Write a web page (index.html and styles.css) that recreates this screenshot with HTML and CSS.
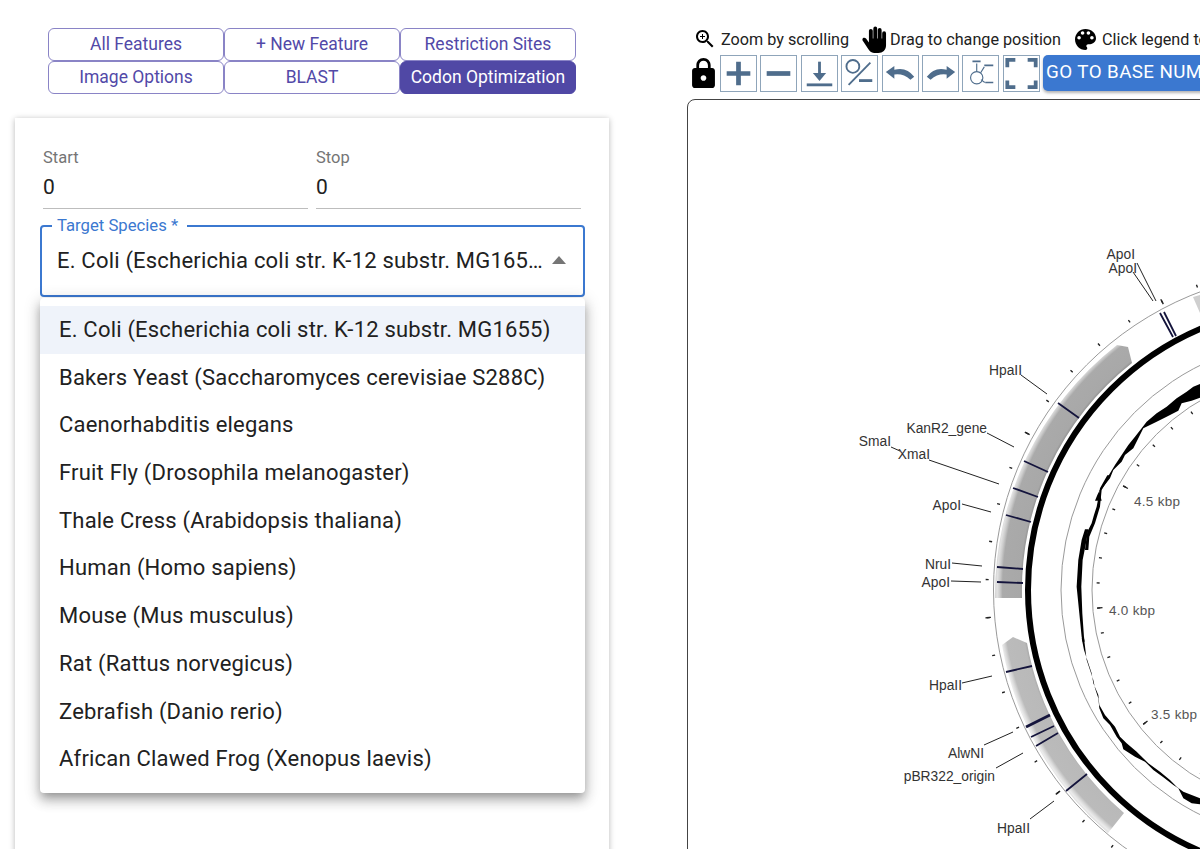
FILE: index.html
```html
<!DOCTYPE html>
<html lang="en">
<head>
    <meta charset="UTF-8">
    <meta name="viewport" content="width=device-width, initial-scale=1.0">
    <title>Plasmid Editor</title>
    <link rel="stylesheet" href="styles.css">
</head>
<body>
    <div class="page">
        <div class="left-column">
            <div class="tabs">
                <button class="tab">All Features</button>
                <button class="tab">+ New Feature</button>
                <button class="tab">Restriction Sites</button>
                <button class="tab">Image Options</button>
                <button class="tab">BLAST</button>
                <button class="tab active">Codon Optimization</button>
            </div>
            <div class="card">
                <div class="range">
                    <div class="field">
                        <label>Start</label>
                        <div class="value">0</div>
                    </div>
                    <div class="field">
                        <label>Stop</label>
                        <div class="value">0</div>
                    </div>
                </div>
                <div class="select-wrap">
                    <fieldset class="select">
                        <legend>Target Species *</legend>
                        <div class="select-row">
                            <span class="select-value">E. Coli (Escherichia coli str. K-12 substr. MG1655)</span>
                            <span class="caret"></span>
                        </div>
                    </fieldset>
                    <ul class="menu">
                        <li class="selected">E. Coli (Escherichia coli str. K-12 substr. MG1655)</li>
                        <li>Bakers Yeast (Saccharomyces cerevisiae S288C)</li>
                        <li>Caenorhabditis elegans</li>
                        <li>Fruit Fly (Drosophila melanogaster)</li>
                        <li>Thale Cress (Arabidopsis thaliana)</li>
                        <li>Human (Homo sapiens)</li>
                        <li>Mouse (Mus musculus)</li>
                        <li>Rat (Rattus norvegicus)</li>
                        <li>Zebrafish (Danio rerio)</li>
                        <li>African Clawed Frog (Xenopus laevis)</li>
                    </ul>
                </div>
            </div>
        </div>
        <div class="right-column">
            <div class="hints">
                <span class="hint hint-zoom">
                    <svg class="hint-icon" viewBox="0 0 24 24"><path d="M15.5 14h-.79l-.28-.27C15.41 12.59 16 11.11 16 9.5 16 5.91 13.09 3 9.5 3S3 5.91 3 9.5 5.91 16 9.5 16c1.61 0 3.09-.59 4.23-1.57l.27.28v.79l5 4.99L20.49 19l-4.99-5zm-6 0C7.01 14 5 11.99 5 9.5S7.01 5 9.5 5 14 7.01 14 9.5 11.99 14 9.5 14z"/><path d="M12 10h-2v2H9v-2H7V9h2V7h1v2h2v1z"/></svg>
                    Zoom by scrolling
                </span>
                <span class="hint hint-drag">
                    <svg class="hand-icon" viewBox="0 0 26 28"><path d="M1 15.500l5.500 8.500c1.500 2.500 3 4 6 4h4.500c4.500 0 8-3 8-8V7.500a2 2 0 0 0-4 0V13h-.6V4a2 2 0 0 0-4 0v9h-.6V2.500a2 2 0 0 0-4 0V13h-.6V5a2 2 0 0 0-4 0v12l-3-4c-1.800-2-5-.5-3.300 2.500z"/></svg>
                    Drag to change position
                </span>
                <span class="hint hint-color">
                    <svg class="hint-icon palette" viewBox="3 3 18 18"><path d="M12 3c-4.970 0-9 4.030-9 9s4.030 9 9 9c.83 0 1.500-.67 1.500-1.500 0-.39-.15-.74-.39-1.010-.23-.26-.38-.61-.38-.99 0-.83.67-1.500 1.500-1.500H16c2.760 0 5-2.240 5-5 0-4.420-4.030-8-9-8zm-5.500 9c-.83 0-1.500-.67-1.500-1.500S5.670 9 6.500 9 8 9.670 8 10.500 7.330 12 6.500 12zm3-4C8.670 8 8 7.330 8 6.500S8.670 5 9.500 5s1.500.67 1.500 1.500S10.330 8 9.500 8zm5 0c-.83 0-1.500-.67-1.500-1.500S13.670 5 14.500 5s1.500.67 1.500 1.500S15.330 8 14.500 8zm3 4c-.83 0-1.500-.67-1.500-1.500S16.670 9 17.500 9s1.500.67 1.500 1.500-.67 1.500-1.500 1.500z"/></svg>
                    Click legend to change color
                </span>
            </div>
            <div class="toolbar">
                <svg class="lock" viewBox="4 1 16 21"><path d="M18 8h-1V6c0-2.760-2.240-5-5-5S7 3.240 7 6v2H6c-1.100 0-2 .9-2 2v10c0 1.100.9 2 2 2h12c1.100 0 2-.9 2-2V10c0-1.100-.9-2-2-2zm-6 9c-1.100 0-2-.9-2-2s.9-2 2-2 2 .9 2 2-.9 2-2 2zm3.100-9H8.900V6c0-1.710 1.390-3.100 3.100-3.100 1.710 0 3.100 1.390 3.100 3.100v2z"/></svg>
                <button class="tool"><svg viewBox="0 0 37 37"><path class="thick" d="M6 18.500h25M18.500 6v25"/></svg></button>
                <button class="tool"><svg viewBox="0 0 37 37"><path class="thick" d="M6 18.500h25"/></svg></button>
                <button class="tool"><svg viewBox="0 0 37 37"><path class="mid" d="M5 30.500h27"/><path class="mid" d="M18.500 6v14"/><path class="solid" d="M11.500 18h14l-7 8.500z"/></svg></button>
                <button class="tool"><svg viewBox="0 0 37 37"><circle class="thin" cx="11.500" cy="11" r="6.800"/><path class="thin" d="M30 7L7 30.500"/><path class="mid" d="M18 26h14"/></svg></button>
                <button class="tool"><svg viewBox="0 0 37 37"><path class="solid" d="M3 17l9-6.500v4Q25 11 33 22l-4 3q-8-7-17-5.500V24z"/></svg></button>
                <button class="tool"><svg viewBox="0 0 37 37"><path class="solid" d="M34 17l-9-6.500v4Q12 11 4 22l4 3q8-7 17-5.500V24z"/></svg></button>
                <button class="tool"><svg viewBox="0 0 37 37"><circle class="fine" cx="14.500" cy="23" r="6.500"/><path class="fine" d="M14.500 8v8.500M22.500 11.500L18.500 18M19 25l4 3"/><path class="dash" d="M10 5.700h8.600M22.500 10H32M23.500 28H32"/></svg></button>
                <button class="tool"><svg viewBox="0 0 37 37"><path class="corner" d="M3.500 12V4H12M25 4h8.500v8M33.500 26v7H25M12 33H3.500v-7"/></svg></button>
                <button class="go-button">GO TO BASE NUMBER</button>
            </div>
            <div class="map-panel">
                <svg class="map" viewBox="688 100 600 800">
                    <defs>
                        <radialGradient id="band-a" gradientUnits="userSpaceOnUse" cx="1312" cy="590" r="318">
                            <stop offset="0.909" stop-color="#8e8e8e"/>
                            <stop offset="0.919" stop-color="#a8a8a8"/>
                            <stop offset="0.973" stop-color="#aaaaaa"/>
                            <stop offset="0.982" stop-color="#cccccc"/>
                            <stop offset="0.99" stop-color="#e2e2e2"/>
                            <stop offset="1" stop-color="#cccccc"/>
                        </radialGradient>
                        <radialGradient id="band-b" gradientUnits="userSpaceOnUse" cx="1312" cy="590" r="318">
                            <stop offset="0.909" stop-color="#a2a2a2"/>
                            <stop offset="0.919" stop-color="#b9b9b9"/>
                            <stop offset="0.973" stop-color="#bbbbbb"/>
                            <stop offset="0.982" stop-color="#d8d8d8"/>
                            <stop offset="0.99" stop-color="#ececec"/>
                            <stop offset="1" stop-color="#d8d8d8"/>
                        </radialGradient>
                    </defs>

                    <!-- features -->
                    <path fill="url(#band-a)" d="M995 598A318 318 0 0 1 1117 345L1128 347L1132 363A290 290 0 0 0 1022 598Z"/>
                    <path fill="url(#band-b)" d="M1002 645L1013 637L1027 643A290 290 0 0 0 1124 813L1108 833A318 318 0 0 1 1002 645Z"/>
                    <path fill="#cfcfcf" d="M1193 297L1210 292V318L1200 313Z"/>

                    <!-- rings -->
                    <circle class="ring" cx="1312" cy="590" r="318.500"/>
                    <circle class="ring-main" cx="1312" cy="590" r="284"/>
                    <circle class="ring" cx="1312" cy="590" r="251"/>
                    <circle class="ring" cx="1312" cy="590" r="220"/>

                    <!-- ticks -->
                    <circle class="tick tick-long" cx="1312" cy="590" r="325" pathLength="360" stroke-dasharray="0.24 6.5" transform="rotate(-0.24 1312 590)"/>
                    <circle class="tick tick-major" cx="1312" cy="590" r="325" pathLength="360" stroke-dasharray="0.24 33.46" transform="rotate(6.5 1312 590)"/>
                    <circle class="tick tick-long" cx="1312" cy="590" r="214" pathLength="360" stroke-dasharray="0.36 6.38" transform="rotate(-0.24 1312 590)"/>
                    <circle class="tick tick-major" cx="1312" cy="590" r="213" pathLength="360" stroke-dasharray="0.36 33.34" transform="rotate(6.5 1312 590)"/>

                    <!-- gc content, traced -->
                    <g transform="translate(1060 370) scale(0.3333)">
                        <polygon class="gc" points="440,34 420,42 400,50 380,65 350,85 320,110 290,130 260,155 245,175 225,200 205,225 185,255 165,285 150,310 135,335 122,355 112,375 105,392 125,392 118,365 130,350 150,325 160,300 185,275 195,255 220,235 235,205 250,175 290,155 320,140 355,122 365,100 395,92 440,76"/>
                    </g>
                    <g transform="translate(850 230) scale(0.3333)">
                        <polygon class="gc" points="772,736 750,775 745,805 740,830 732,855 725,880 712,905 710,920 705,960 715,960 718,920 735,880 750,830 755,780 782,736"/>
                    </g>
                    <g transform="translate(850 530) scale(0.3333)">
                        <polygon class="gc" points="705,-2 695,30 685,90 680,170 688,250 695,320 698,335 704,335 702,320 697,250 694,170 698,90 708,40 715,-2"/>
                    </g>
                    <g transform="translate(1060 640) scale(0.3333)">
                        <polygon class="gc" points="65,-5 72,30 85,70 95,100 100,130 115,165 118,195 135,225 165,260 180,290 200,310 230,335 265,370 300,395 330,420 350,440 370,455 420,475 440,480 440,495 395,490 370,475 355,445 340,435 310,412 280,390 255,365 225,350 190,328 185,310 170,290 150,255 130,235 118,205 115,175 105,145 100,120 90,90 80,60 72,-5"/>
                    </g>

                    <!-- restriction sites -->
                    <path class="site" d="M1160 313L1173 337M1164 312L1176 336M1058 403L1079 418M1024 461L1048 472M1013 488L1038 497M1006 515L1031 522M997 567L1023 569M997 582L1023 583M1006 672L1032 666M1031 737L1054 726M1036 746L1058 733M1066 791L1087 774"/>
                    <path class="site site-thick" d="M1026 727L1050 715"/>

                    <!-- leaders -->
                    <path class="leader" d="M1137 263L1156 301M1133 272L1153 301M1021 375L1047 394M987 433L1014 447M891 447L900 451M929 460L999 484M962 504L991 512M952 563L982 566M951 581L981 582M962 683L992 676M984 745L1013 732M996 768L1023 753M1030 819L1054 801"/>

                    <!-- labels -->
                    <text class="label" x="1135" y="259">ApoI</text>
                    <text class="label" x="1137" y="273">ApoI</text>
                    <text class="label" x="1022" y="375">HpaII</text>
                    <text class="label" x="987" y="433">KanR2_gene</text>
                    <text class="label" x="891" y="446">SmaI</text>
                    <text class="label" x="930" y="459">XmaI</text>
                    <text class="label" x="961" y="510">ApoI</text>
                    <text class="label" x="951" y="569">NruI</text>
                    <text class="label" x="950" y="587">ApoI</text>
                    <text class="label" x="962" y="690">HpaII</text>
                    <text class="label" x="984" y="758">AlwNI</text>
                    <text class="label" x="995" y="781">pBR322_origin</text>
                    <text class="label" x="1030" y="833">HpaII</text>
                    <text class="kbp" x="1134" y="506">4.5 kbp</text>
                    <text class="kbp" x="1109" y="615">4.0 kbp</text>
                    <text class="kbp" x="1151" y="719">3.5 kbp</text>
                </svg>
            </div>
        </div>
    </div>
</body>
</html>
```

FILE: styles.css
```css
html, body {
    margin: 0;
    height: 100%;
    overflow: hidden;
    background-color: #ffffff;
}
body {
    font-family: Roboto, "Liberation Sans", sans-serif;
    color: #212121;
}
.page {
    display: flex;
    width: 1300px;
    height: 849px;
}
.left-column {
    flex: none;
    width: 625px;
    padding: 28px 0 0 15px;
    box-sizing: content-box;
}
.right-column {
    flex: none;
    width: 613px;
    margin-left: 47px;
}

/* tabs */
.tabs {
    display: grid;
    grid-template-columns: repeat(3, 176px);
    grid-auto-rows: 33px;
    margin-left: 33px;
}
.tab {
    font-family: inherit;
    font-size: 17.5px;
    color: #5249a8;
    background-color: #ffffff;
    border: 1px solid #8a84c6;
    border-radius: 6px;
    padding: 0 0 1px 0;
}
.tab.active {
    color: #ffffff;
    background-color: #5048a5;
    border-color: #5048a5;
}

/* card */
.card {
    width: 594px;
    height: 760px;
    margin-top: 24px;
    box-sizing: border-box;
    padding: 30px 25px 0 25px;
    box-shadow: 0 1px 6px rgba(0,0,0,0.28);
}
.range {
    display: flex;
    gap: 8px;
    margin: 0 3px;
}
.field {
    width: 265px;
    height: 61px;
    box-sizing: border-box;
    border-bottom: 1px solid #bdbdbd;
}
.field label {
    display: block;
    font-size: 16.5px;
    line-height: 20px;
    color: #757575;
}
.value {
    font-size: 21px;
    line-height: 24px;
    margin-top: 7px;
}
.select-wrap {
    position: relative;
    margin: 8px -1px 0 0;
}
.select {
    margin: 0;
    padding: 0 17px 0 15px;
    min-width: 0;
    width: 100%;
    height: 80px;
    box-sizing: border-box;
    border: 2px solid #3b78d0;
    border-radius: 4px;
}
.select legend {
    font-size: 16.7px;
    line-height: 18px;
    color: #3b78d0;
    padding: 0 9px 0 5px;
    margin-left: -5px;
}
.select-row {
    display: flex;
    align-items: center;
    height: 34px;
    margin-top: 8px;
}
.select-value {
    flex: 1;
    min-width: 0;
    font-size: 22px;
    letter-spacing: 0.2px;
    white-space: nowrap;
    overflow: hidden;
    text-overflow: ellipsis;
}
.caret {
    flex: none;
    margin: 0 0 0 9px;
    border-left: 7.5px solid transparent;
    border-right: 7.5px solid transparent;
    border-bottom: 8px solid #757575;
}
.menu {
    position: absolute;
    top: 81px;
    left: 0;
    right: 0;
    margin: 0;
    padding: 8px 0 10px 0;
    list-style: none;
    background-color: #ffffff;
    border-radius: 4px;
    box-shadow: 0 5px 8px -3px rgba(0,0,0,0.25), 0 8px 12px 1px rgba(0,0,0,0.16), 0 3px 16px 2px rgba(0,0,0,0.14);
}
.menu li {
    height: 47.7px;
    line-height: 47.7px;
    padding-left: 19px;
    font-size: 22px;
    letter-spacing: 0.2px;
}
.menu li.selected {
    background-color: #eff3fa;
}

/* hints */
.hints {
    display: flex;
    align-items: center;
    height: 24px;
    margin-top: 27px;
    padding-left: 6px;
    font-size: 16.2px;
    white-space: nowrap;
}
.hint {
    display: flex;
    align-items: center;
}
.hint-drag {
    margin-left: 13px;
}
.hint-color {
    margin-left: 14px;
}
.hint-icon {
    width: 24px;
    height: 24px;
    margin-right: 4px;
}
.palette {
    width: 21px;
    height: 21px;
    margin-right: 6px;
}
.hand-icon {
    width: 25px;
    height: 27px;
    margin-right: 3px;
}

/* toolbar */
.toolbar {
    display: flex;
    align-items: flex-start;
    gap: 3.4px;
    height: 37px;
    margin-top: 4px;
    padding-left: 5px;
}
.lock {
    flex: none;
    width: 23px;
    height: 30px;
    margin: 3px 1.6px 0 0;
}
.tool {
    flex: none;
    width: 37px;
    height: 37px;
    padding: 0;
    background-color: #ffffff;
    border: 1px solid #8fa5ba;
}
.tool svg {
    display: block;
    width: 35px;
    height: 35px;
}
.tool path, .tool circle {
    fill: none;
    stroke: #4f6d8c;
}
.tool .thick { stroke-width: 5px; }
.tool .mid { stroke-width: 3px; }
.tool .thin { stroke-width: 2px; }
.tool .fine { stroke-width: 1.2px; }
.tool .dash { stroke-width: 1.8px; }
.tool .corner { stroke-width: 4px; }
.tool .solid {
    fill: #4f6d8c;
    stroke: none;
}
.go-button {
    flex: none;
    width: 200px;
    height: 36px;
    padding: 0 0 2px 3px;
    text-align: left;
    font-family: inherit;
    font-size: 18.8px;
    letter-spacing: 0.4px;
    color: #ffffff;
    background-color: #3b78d0;
    border: none;
    border-radius: 5px;
    box-shadow: 0 2px 3px rgba(0,0,0,0.3);
    white-space: nowrap;
}

/* plasmid map */
.map-panel {
    width: 600px;
    height: 800px;
    margin-top: 7px;
    border: 1px solid #444444;
    border-radius: 8px 0 0 0;
    overflow: hidden;
}
.map {
    display: block;
    width: 600px;
    height: 800px;
}
.ring {
    fill: none;
    stroke: #9a9a9a;
    stroke-width: 1px;
}
.ring-main {
    fill: none;
    stroke: #000000;
    stroke-width: 6px;
}
.tick {
    fill: none;
    stroke: #222222;
}
.tick-long { stroke-width: 3px; }
.tick-major { stroke-width: 5.5px; }
.gc {
    fill: #000000;
}
.site {
    fill: none;
    stroke: #14143c;
    stroke-width: 1.8px;
}
.site-thick {
    stroke-width: 2.8px;
}
.leader {
    fill: none;
    stroke: #222222;
    stroke-width: 1px;
}
.label {
    font-family: "Liberation Sans", Arial, sans-serif;
    font-size: 13.8px;
    fill: #333333;
    text-anchor: end;
}
.kbp {
    font-family: "Liberation Sans", Arial, sans-serif;
    font-size: 13.5px;
    letter-spacing: 0.3px;
    fill: #555555;
}
```
